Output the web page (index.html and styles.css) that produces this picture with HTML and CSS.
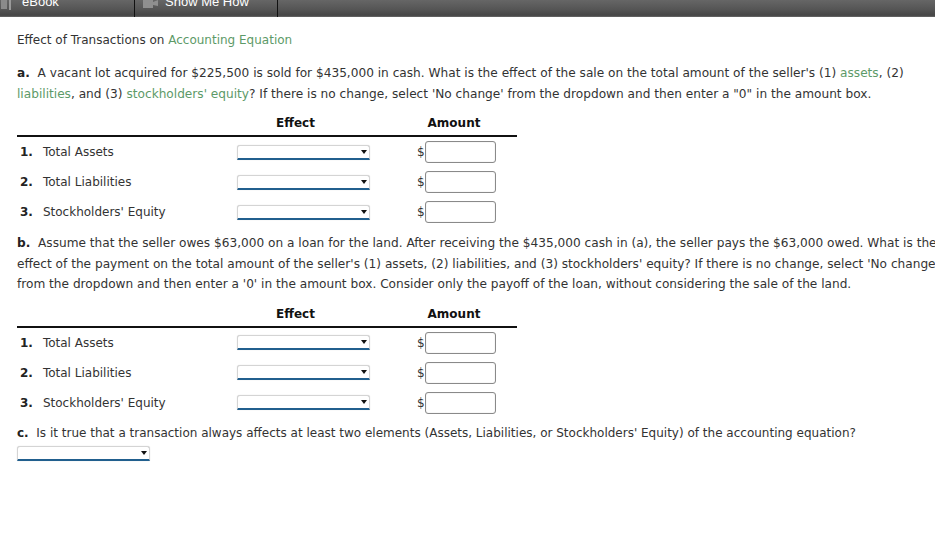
FILE: index.html
```html
<!DOCTYPE html>
<html>
<head>
<meta charset="utf-8">
<link rel="stylesheet" href="styles.css">
</head>
<body>
<div class="topbar">
  <div class="tab tab-ebook">
    <svg class="ico" width="12" height="10" viewBox="0 0 12 10"><rect x="0" y="0" width="6" height="9" fill="#8a8a8a"/><rect x="8" y="0" width="2" height="10" fill="#9a9a9a"/></svg>
    <span class="tab-text">eBook</span>
  </div>
  <div class="tab tab-show">
    <svg class="ico" width="16" height="10" viewBox="0 0 16 10"><rect x="0" y="0" width="10" height="8" fill="#8f8f8f"/><polygon points="10,2 15,0 15,6 10,5" fill="#8f8f8f"/></svg>
    <span class="tab-text">Show Me How</span>
  </div>
  <div class="tab tab-rest"></div>
</div>

<div class="content">
  <h1 class="title">Effect of Transactions on <span class="link">Accounting Equation</span></h1>

  <p class="para"><b>a.</b>&nbsp; A vacant lot acquired for $225,500 is sold for $435,000 in cash. What is the effect of the sale on the total amount of the seller's (1) <span class="link">assets</span>, (2) <span class="link">liabilities</span>, and (3) <span class="link">stockholders' equity</span>? If there is no change, select 'No change' from the dropdown and then enter a "0" in the amount box.</p>

  <div class="qtable">
    <div class="thead">
      <div class="th-blank"></div>
      <div class="th th-effect">Effect</div>
      <div class="th th-amount">Amount</div>
    </div>
    <div class="row">
      <div class="lbl"><b>1.</b><span class="lbl-text">Total Assets</span></div>
      <div class="eff"><span class="sel"><span class="arrow"></span></span></div>
      <div class="amt"><span class="dollar">$</span><span class="box"></span></div>
    </div>
    <div class="row">
      <div class="lbl"><b>2.</b><span class="lbl-text">Total Liabilities</span></div>
      <div class="eff"><span class="sel"><span class="arrow"></span></span></div>
      <div class="amt"><span class="dollar">$</span><span class="box"></span></div>
    </div>
    <div class="row">
      <div class="lbl"><b>3.</b><span class="lbl-text">Stockholders' Equity</span></div>
      <div class="eff"><span class="sel"><span class="arrow"></span></span></div>
      <div class="amt"><span class="dollar">$</span><span class="box"></span></div>
    </div>
  </div>

  <p class="para para-b"><b>b.</b>&nbsp; Assume that the seller owes $63,000 on a loan for the land. After receiving the $435,000 cash in (a), the seller pays the $63,000 owed. What is the effect of the payment on the total amount of the seller's (1) assets, (2) liabilities, and (3) stockholders' equity? If there is no change, select 'No change' from the dropdown and then enter a '0' in the amount box. Consider only the payoff of the loan, without considering the sale of the land.</p>

  <div class="qtable qtable-b">
    <div class="thead">
      <div class="th-blank"></div>
      <div class="th th-effect">Effect</div>
      <div class="th th-amount">Amount</div>
    </div>
    <div class="row">
      <div class="lbl"><b>1.</b><span class="lbl-text">Total Assets</span></div>
      <div class="eff"><span class="sel"><span class="arrow"></span></span></div>
      <div class="amt"><span class="dollar">$</span><span class="box"></span></div>
    </div>
    <div class="row">
      <div class="lbl"><b>2.</b><span class="lbl-text">Total Liabilities</span></div>
      <div class="eff"><span class="sel"><span class="arrow"></span></span></div>
      <div class="amt"><span class="dollar">$</span><span class="box"></span></div>
    </div>
    <div class="row">
      <div class="lbl"><b>3.</b><span class="lbl-text">Stockholders' Equity</span></div>
      <div class="eff"><span class="sel"><span class="arrow"></span></span></div>
      <div class="amt"><span class="dollar">$</span><span class="box"></span></div>
    </div>
  </div>

  <p class="para para-c"><b>c.</b>&nbsp; Is it true that a transaction always affects at least two elements (Assets, Liabilities, or Stockholders' Equity) of the accounting equation?</p>
  <div class="csel"><span class="sel"><span class="arrow"></span></span></div>
</div>
</body>
</html>
```

FILE: styles.css
```css
html, body {
  margin: 0;
  padding: 0;
  background: #fff;
}
body {
  font-family: "DejaVu Sans", Verdana, sans-serif;
  font-size: 12px;
  color: #333;
  width: 935px;
  height: 556px;
  overflow: hidden;
}
.topbar {
  display: flex;
  height: 17px;
  overflow: hidden;
  background: linear-gradient(#666 0%, #555 55%, #454545 90%, #6a6a6a 100%);
}
.tab {
  display: flex;
  align-items: flex-start;
  height: 17px;
  border-right: 1px solid #111;
  font-family: "Liberation Sans", Arial, sans-serif;
  font-size: 13px;
  color: #fff;
}
.tab-ebook { width: 134px; }
.tab-show { width: 142px; }
.tab-rest { flex: 1; border-right: none; }
.tab-ebook .ico { margin: 0 0 0 1px; }
.tab-show .ico { margin: 0 0 0 8px; }
.tab-text {
  line-height: 13px;
  margin-top: -5px;
}
.tab-ebook .tab-text { margin-left: 9px; }
.tab-show .tab-text { margin-left: 6px; }

.content {
  width: 945px;
  padding: 0 17px;
}
.link { color: #5d9a68; }
.title {
  font-size: 12px;
  font-weight: normal;
  line-height: 20px;
  margin: 13px 0 0;
}
.para {
  margin: 13px 0 0;
  font-size: 12.15px;
  line-height: 20.5px;
}
.para b, .lbl b { color: #222; }

.qtable {
  width: 500px;
  margin-top: 9px;
}
.thead {
  display: grid;
  grid-template-columns: 220px 133px 147px;
  border-bottom: 2px solid #111;
  height: 22px;
}
.th {
  font-weight: bold;
  color: #111;
  line-height: 20px;
  text-align: center;
}
.th-effect { padding-right: 16px; }
.th-amount { padding-left: 21px; }
.row {
  display: grid;
  grid-template-columns: 220px 133px 147px;
  align-items: center;
  height: 30px;
}
.qtable-b .row:first-of-type { margin-top: 1px; }
.lbl {
  padding-left: 3px;
  color: #333;
}
.lbl-text { margin-left: 10px; }
.eff { display: flex; align-items: center; }
.sel {
  position: relative;
  display: block;
  width: 131px;
  height: 12px;
  border: 1px solid #d4d4d4;
  border-bottom: 2px solid #215f8e;
  border-radius: 3px 3px 0 0;
  background: #fff;
  box-shadow: 0 0 1px #ccc;
}
.arrow {
  position: absolute;
  right: 2px;
  top: 4px;
  width: 0;
  height: 0;
  border-left: 3px solid transparent;
  border-right: 3px solid transparent;
  border-top: 4px solid #111;
}
.amt {
  display: flex;
  align-items: center;
  padding-left: 47px;
}
.dollar {
  color: #333;
  font-size: 12px;
}
.box {
  display: block;
  width: 69px;
  height: 20px;
  border: 1px solid #8a8a8a;
  border-radius: 3px;
  box-shadow: inset 0 0 1px #bbb;
}
.para-b { margin-top: 6px; }
.qtable-b { margin-top: 9px; }
.para-c { margin-top: 5px; font-size: 12px; }
.csel { margin-top: 3px; }
```
